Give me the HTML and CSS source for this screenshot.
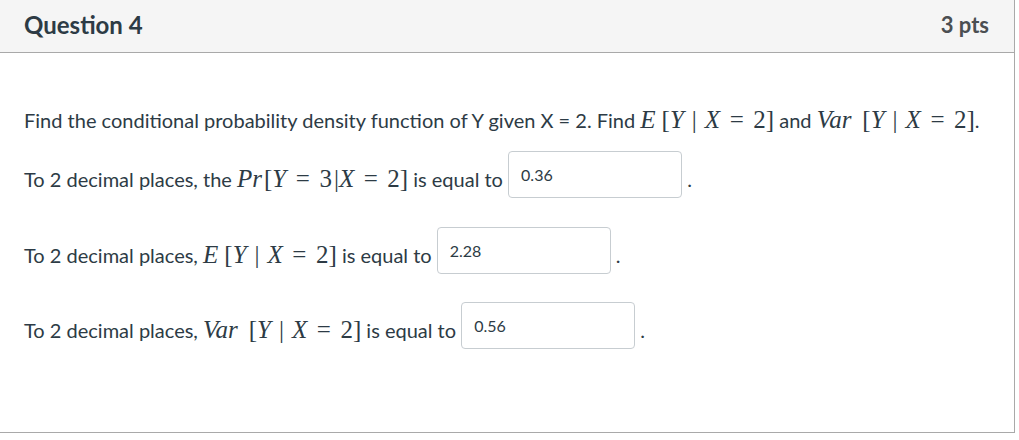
FILE: index.html
```html
<!DOCTYPE html>
<html>
<head>
<meta charset="utf-8">
<link rel="stylesheet" href="styles.css">
</head>
<body>
<div class="card">
  <div class="header">
    <h2 class="title">Question 4</h2>
    <span class="pts">3 pts</span>
  </div>
  <div class="content">
    <p class="q">Find the conditional probability density function of Y given X = 2. Find <span class="m"><i>E</i><span class="sl"></span>[<i>Y</i><span class="sb"></span>|<span class="sb"></span><i>X</i><span class="se"></span>=<span class="se"></span>2]</span> and <span class="m"><i>Var</i><span class="slv"></span>[<i>Y</i><span class="sb"></span>|<span class="sb"></span><i>X</i><span class="se"></span>=<span class="se"></span>2]</span>.</p>
    <p class="row">To 2 decimal places, the <span class="m"><i>Pr</i><span class="sp"></span>[<i>Y</i><span class="se"></span>=<span class="se"></span>3<span class="sp"></span>|<i>X</i><span class="se"></span>=<span class="se"></span>2]</span> is equal to <span class="answer">0.36</span> .</p>
    <p class="row">To 2 decimal places, <span class="m"><i>E</i><span class="sl"></span>[<i>Y</i><span class="sb"></span>|<span class="sb"></span><i>X</i><span class="se"></span>=<span class="se"></span>2]</span> is equal to <span class="answer">2.28</span> .</p>
    <p class="row">To 2 decimal places, <span class="m"><i>Var</i><span class="slv"></span>[<i>Y</i><span class="sb"></span>|<span class="sb"></span><i>X</i><span class="se"></span>=<span class="se"></span>2]</span> is equal to <span class="answer">0.56</span> .</p>
  </div>
</div>
</body>
</html>
```
FILE: styles.css
```css
html, body {
  margin: 0;
  padding: 0;
  background: #ffffff;
}
body {
  font-family: Lato, "Liberation Sans", sans-serif;
  color: #2d3b45;
}
.card {
  width: 1014px;
  height: 432px;
  border-right: 1px solid #a9a9a9;
  border-bottom: 1px solid #a9a9a9;
  box-shadow: 0 1px 0 #d0d0d0;
  box-sizing: content-box;
}
.header {
  height: 53px;
  box-sizing: border-box;
  background: #f5f5f5;
  border-bottom: 1px solid #a9a9a9;
  display: flex;
  align-items: center;
  justify-content: space-between;
  padding: 0 25px 4px 24px;
}
.title {
  margin: 0;
  font-size: 24px;
  font-weight: 700;
  color: #2d3b45;
}
.pts {
  font-size: 22px;
  font-weight: 700;
  color: #4b4f52;
}
.content {
  padding: 0 24px;
}
.q {
  margin: 0;
  padding-top: 52px;
  font-size: 20px;
  line-height: 30px;
}
.row {
  margin: 28px 0 0;
  font-size: 20px;
  line-height: 30px;
}
.q + .row {
  margin-top: 16px;
}
.q + .row + .row {
  margin-top: 29px;
}
.m {
  font-family: "Liberation Serif", "Times New Roman", serif;
  font-size: 25px;
}
.m i {
  font-style: italic;
}
.sl {
  display: inline-block;
  width: 6px;
}
.slv {
  display: inline-block;
  width: 11px;
}
.sp {
  display: inline-block;
  width: 2px;
}
.sb {
  display: inline-block;
  width: 8px;
}
.se {
  display: inline-block;
  width: 9.5px;
}
.answer {
  display: inline-block;
  vertical-align: 6px;
  width: 172px;
  height: 45px;
  line-height: 45px;
  box-sizing: content-box;
  border: 1px solid #c7cdd1;
  border-radius: 4px;
  text-indent: 12px;
  font-size: 16px;
  color: #2d3b45;
  background: #fff;
}
```
